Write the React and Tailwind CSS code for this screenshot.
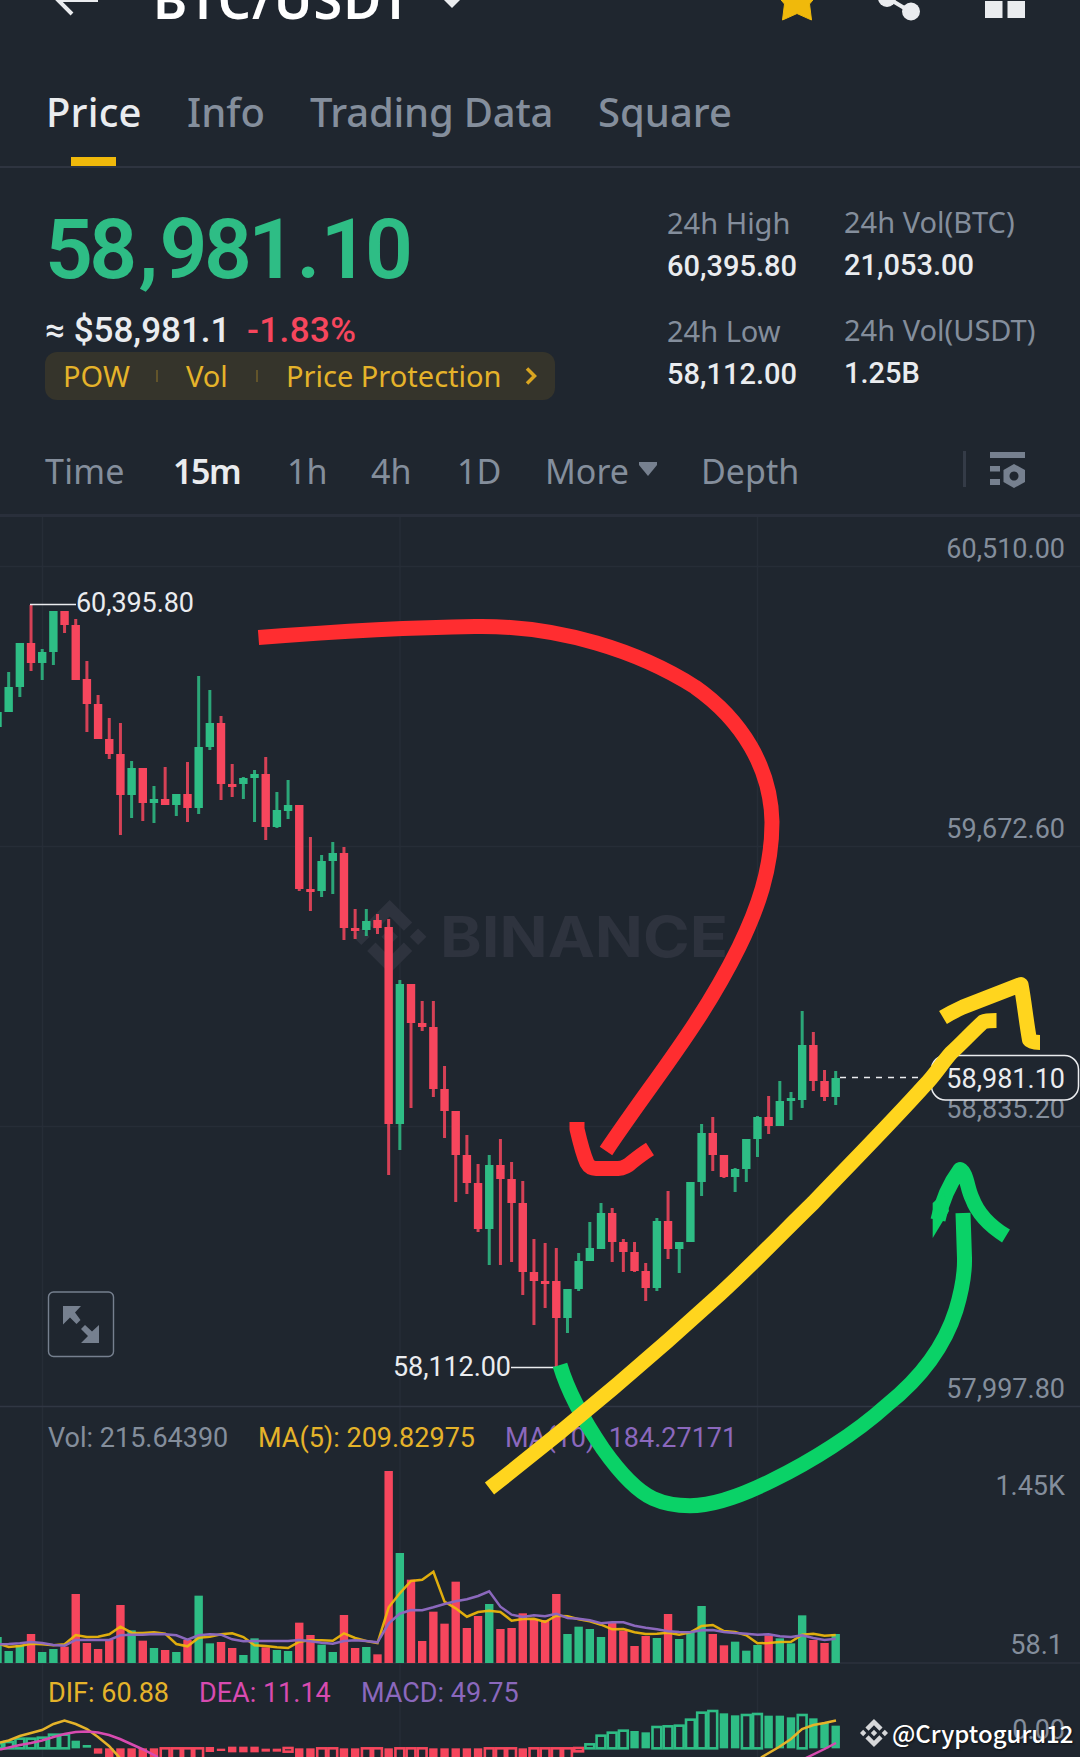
import React from 'react';

const UP = '#2ebd85';
const DOWN = '#f6465d';
const STEP = 11.176;
const cx = (i) => -2.5 + STEP * i;

// [high, body top, body bottom, low, rising]
const candles = [
  [712, 712, 727, 727, 1], [672, 687, 712, 712, 1], [643, 643, 687, 697, 1], [605, 643, 663, 671, 0],
  [649, 652, 663, 680, 1], [611, 611, 652, 665, 1], [611, 611, 625, 633, 0], [619, 625, 680, 680, 0],
  [661, 679, 704, 732, 0], [695, 704, 739, 739, 0], [718, 739, 754, 759, 0], [723, 754, 795, 835, 0],
  [761, 768, 795, 818, 1], [768, 768, 803, 821, 0], [786, 799, 803, 823, 1], [767, 799, 805, 805, 0],
  [794, 794, 805, 816, 1], [762, 794, 808, 822, 0], [676, 747, 808, 814, 1], [690, 723, 747, 750, 1],
  [716, 723, 784, 800, 0], [764, 784, 787, 797, 0], [777, 778, 784, 799, 1], [770, 774, 778, 822, 1],
  [757, 774, 827, 840, 0], [792, 810, 827, 828, 1], [780, 805, 811, 819, 1], [805, 805, 889, 891, 0],
  [837, 889, 892, 911, 0], [855, 861, 891, 897, 1], [842, 853, 861, 894, 1], [847, 853, 928, 940, 0],
  [909, 928, 931, 939, 0], [909, 921, 930, 936, 1], [914, 920, 928, 934, 0], [919, 927, 1124, 1175, 0],
  [980, 984, 1124, 1150, 1], [984, 984, 1023, 1108, 0], [1001, 1023, 1027, 1031, 0], [1001, 1027, 1089, 1097, 0],
  [1066, 1089, 1111, 1138, 0], [1111, 1111, 1155, 1202, 0], [1135, 1155, 1183, 1194, 0], [1164, 1183, 1229, 1232, 0],
  [1155, 1165, 1229, 1265, 1], [1139, 1165, 1179, 1265, 0], [1162, 1179, 1203, 1262, 0], [1181, 1203, 1272, 1295, 0],
  [1239, 1272, 1281, 1325, 0], [1243, 1281, 1284, 1308, 0], [1248, 1281, 1318, 1367, 0], [1289, 1289, 1318, 1333, 1],
  [1253, 1261, 1289, 1291, 1], [1222, 1248, 1261, 1261, 1], [1203, 1213, 1249, 1249, 1], [1208, 1213, 1242, 1262, 0],
  [1239, 1242, 1252, 1272, 0], [1242, 1252, 1271, 1272, 0], [1263, 1271, 1288, 1301, 0], [1218, 1221, 1288, 1291, 1],
  [1191, 1221, 1249, 1259, 0], [1242, 1242, 1249, 1273, 1], [1182, 1182, 1242, 1242, 1], [1124, 1133, 1182, 1196, 1],
  [1117, 1133, 1155, 1171, 0], [1155, 1155, 1177, 1178, 0], [1168, 1169, 1177, 1192, 1], [1139, 1139, 1169, 1182, 1],
  [1116, 1117, 1139, 1157, 1], [1096, 1117, 1126, 1134, 0], [1081, 1101, 1126, 1126, 1], [1092, 1098, 1101, 1120, 1],
  [1011, 1045, 1100, 1108, 1], [1032, 1045, 1081, 1091, 0], [1070, 1081, 1097, 1101, 0], [1071, 1078, 1097, 1105, 1],
];

// Volume tops and moving averages, in thirds of a pixel below y = 1450
const volume = [
  561, 603, 585, 552, 606, 597, 590, 432, 579, 597, 570, 465, 541, 572, 594, 600, 606, 570, 437, 580,
  576, 594, 615, 565, 592, 600, 603, 518, 555, 584, 606, 495, 594, 591, 613, 63, 309, 389, 573, 485,
  521, 395, 534, 498, 462, 537, 534, 490, 507, 510, 432, 552, 530, 537, 561, 519, 542, 588, 558, 564,
  492, 567, 545, 468, 552, 586, 575, 602, 585, 556, 565, 580, 496, 570, 579, 552,
];
const ma5 = [
  580, 591, 588, 581, 583, 586, 583, 555, 561, 560, 553, 530, 548, 549, 547, 551, 582, 589, 563, 560,
  553, 550, 561, 586, 588, 592, 594, 575, 571, 571, 572, 550, 564, 573, 579, 472, 430, 393, 389, 365,
  455, 475, 500, 486, 482, 486, 512, 507, 506, 516, 497, 499, 508, 514, 524, 538, 537, 547, 552, 551,
  548, 554, 547, 528, 525, 543, 546, 556, 580, 579, 576, 575, 554, 551, 557, 555,
];
const ma10 = [
  583, 582, 580, 576, 579, 585, 587, 570, 570, 570, 570, 556, 554, 554, 552, 553, 556, 569, 556, 553,
  554, 568, 574, 573, 573, 573, 573, 570, 574, 578, 581, 573, 571, 573, 577, 520, 491, 480, 481, 472,
  462, 454, 448, 438, 424, 470, 494, 501, 496, 499, 491, 504, 506, 511, 520, 517, 517, 527, 533, 538,
  544, 546, 547, 541, 540, 546, 549, 551, 554, 553, 559, 561, 556, 564, 570, 566,
];

// MACD histogram: [top, bottom, hollow, rising]
const red = (hollow) => [895, 950, hollow, 0];
const thin = (a, b, hollow = 0) => [a, b, hollow, 0];
const green = (top, hollow) => [top, 895, hollow, 1];
const macd = [
  green(880, 1), green(876, 1), green(866, 1), green(866, 1), green(863, 1), green(854, 1), green(854, 1),
  green(872, 0), [885, 893, 0, 1], thin(895, 911), red(0), red(0), red(0), red(0), red(0),
  red(1), red(1), red(1), red(1), thin(891, 906), thin(896, 903), thin(890, 907), thin(890, 907), thin(890, 907),
  thin(896, 905), thin(896, 905), thin(894, 905, 1), red(0), red(0), red(1), red(1), red(0), red(0), red(1),
  red(1), red(0), red(1), red(1), red(1), red(0), red(0), red(0), red(0), red(0), red(1), red(1), red(1),
  red(0), red(1), red(1), red(1), red(1), thin(894, 904, 1),
  green(883, 1), green(857, 1), green(848, 1), green(842, 1), green(843, 0), green(847, 0), green(831, 1),
  green(829, 1), green(827, 1), green(809, 1), green(788, 1), green(783, 1), green(790, 0), green(796, 0),
  green(795, 1), green(792, 1), green(797, 0), green(797, 0), green(802, 0), green(795, 1), green(805, 0),
  green(819, 0), green(827, 0),
];

const vy = (v) => 1450 + v / 3;
const line = (vals) => vals.map((v, i) => `${cx(i).toFixed(1)},${vy(v).toFixed(1)}`).join(' ');

const BINANCE =
  'M16.624 13.9202l2.7175 2.7154-7.353 7.353-7.353-7.352 2.7175-2.7164 4.6355 4.6595 4.6356-4.6595zm4.6366-4.6366L24 12l-2.7154 2.7164L18.5682 12l2.6924-2.7164zm-9.272.001l2.7163 2.6914-2.7164 2.7174v-.001L9.2721 12l2.7164-2.7154zm-9.2722-.001L5.4088 12l-2.6914 2.6924L0 12l2.7164-2.7164zM11.9885.0115l7.353 7.329-2.7174 2.7154-4.6356-4.6356-4.6355 4.6595-2.7174-2.7154 7.353-7.353z';

function Header() {
  return (
    <header className="flex h-7 items-start overflow-hidden">
      <svg className="ml-[50px] w-[103px] shrink-0" height="28" viewBox="50 0 103 28" fill="none" stroke="#eaecef" strokeWidth="4">
        <path d="M57 0H98M56 -2L72 14" />
      </svg>
      <span className="-mt-px w-[286px] shrink-0 text-[52px] leading-[0px] font-semibold tracking-[1px] whitespace-nowrap text-white">BTC/USDT</span>
      <svg className="shrink-0" width="641" height="28" viewBox="439 0 641 28">
        <path d="M441 -3H463L452 8z" fill="#eaecef" />
        <path d="M776 -6L784.500 4L782.500 20L797 13.500L811.500 20L809.500 4L818 -6z" fill="#f0b90b" stroke="#f0b90b" strokeWidth="1" strokeLinejoin="round" />
        <g fill="#eaecef">
          <circle cx="911" cy="11.500" r="9" />
          <circle cx="887" cy="-2" r="9" />
          <path d="M886 -3L911 12" stroke="#eaecef" strokeWidth="4" />
          <path d="M985 1h17.500v17H985zM1007.500 1h17.500v17h-17.500z" />
        </g>
      </svg>
    </header>
  );
}

function Tabs() {
  return (
    <nav className="border-b-2 border-[#2e3440] text-[#848e9c]">
      <div className="flex pt-[60px] pl-[46px] text-[40px] leading-[48px] font-medium whitespace-nowrap">
        <span className="w-[141px] tracking-[0.2px] text-[#eaecef]">Price</span>
        <span className="w-[123px]">Info</span>
        <span className="w-[288px] tracking-[-0.2px]">Trading Data</span>
        <span>Square</span>
      </div>
      <div className="mt-[21px] ml-[71px] h-[9px] w-[45px] bg-[#f0b90b]" />
    </nav>
  );
}

function Stat({ label, value }) {
  return (
    <div className="h-[108px] whitespace-nowrap">
      <div className="text-[29px] leading-10 text-[#848e9c]">{label}</div>
      <div className="mt-[3px] font-[Roboto] text-[29px] leading-10 font-medium text-[#eaecef]">{value}</div>
    </div>
  );
}

function Summary() {
  return (
    <section className="flex h-[246px] whitespace-nowrap">
      <div className="w-[667px] pt-[40px] pl-[45px]">
        <div className="font-[Roboto] text-[84px] leading-[84px] font-semibold tracking-[-3.7px] text-[#2ebd85]">
          58<span className="mx-[5px]">,</span>981<span className="mx-[4px]">.</span>10
        </div>
        <div className="mt-[19px] flex font-[Roboto] text-[35px] leading-10 font-medium">
          <span className="w-[202px] text-[#eaecef]">≈ $58,981.1</span>
          <span className="tracking-[0.4px] text-[#f6465d]">-1.83%</span>
        </div>
        <div className="mt-px flex h-12 w-[510px] items-center rounded-xl bg-[#35342b] pl-[18px] text-[29px] text-[#e5b32a]">
          <span className="w-[93px]">POW</span>
          <i className="mr-[28px] h-3 w-[2px] bg-[#62542a]" />
          <span className="w-[70px]">Vol</span>
          <i className="mr-[28px] h-3 w-[2px] bg-[#62542a]" />
          <span className="w-[239px]">Price Protection</span>
          <svg width="12" height="18" viewBox="0 0 12 18" fill="none" stroke="#d9a520" strokeWidth="3.500">
            <path d="M2 1.500L9.500 9L2 16.500" />
          </svg>
        </div>
      </div>
      <div className="w-[177px] pt-[35px]">
        <Stat label="24h High" value="60,395.80" />
        <Stat label="24h Low" value="58,112.00" />
      </div>
      <div className="pt-[34px]">
        <Stat label="24h Vol(BTC)" value="21,053.00" />
        <Stat label="24h Vol(USDT)" value="1.25B" />
      </div>
    </section>
  );
}

function Intervals() {
  return (
    <div className="flex h-[103px] border-b-[3px] border-[#292f3b] pt-[37px] pl-[45px] text-[34px] leading-10 whitespace-nowrap text-[#848e9c]">
      <span className="w-[128px] tracking-[0.3px]">Time</span>
      <span className="w-[114px] font-semibold tracking-[-1.4px] text-[#eaecef]">15m</span>
      <span className="w-[84px]">1h</span>
      <span className="w-[86px]">4h</span>
      <span className="w-[88px]">1D</span>
      <span className="w-[94px]">More</span>
      <svg className="mt-[11px] mr-[44px]" width="18" height="14" viewBox="0 0 18 14">
        <path d="M0 0H18V3L9 14L0 3z" fill="#76808f" />
      </svg>
      <span className="w-[262px]">Depth</span>
      <i className="h-9 w-[3px] bg-[#343b47]" />
      <svg className="ml-[24px]" width="36" height="37" viewBox="0 0 36 37" fill="#76808f">
        <path d="M0 1H35V7H0zM0 15H10V20.500H0zM0 28H10V34H0z" />
        <path fillRule="evenodd" d="M24 13L35 19V31L24 37L13.500 31V19zM24 20.500a4.500 4.500 0 1 0 0.010 0z" />
      </svg>
    </div>
  );
}

function AxisLabel({ y, x = 1065, children, fill = '#848e9c' }) {
  return (
    <text x={x} y={y} textAnchor="end" fill={fill}>
      {children}
    </text>
  );
}

function Chart() {
  return (
    <svg className="block font-[Roboto] text-[27px]" width="1080" height="1240" viewBox="0 517 1080 1240">
      {/* grid */}
      <path d="M42.500 517V1757M400 517V1757M757.500 517V1757M0 566.500H1080M0 846.500H1080M0 1126.500H1080" stroke="#262d37" strokeWidth="1.500" fill="none" />
      <path d="M0 1406.500H1080" stroke="#303743" strokeWidth="1.500" />
      <path d="M0 1663H1080" stroke="#282e39" strokeWidth="2" />

      {/* watermark */}
      <g fill="#2e333e">
        <path d={BINANCE} transform="translate(353 900) scale(3.060)" />
        <text x="440" y="957" textLength="288" lengthAdjust="spacingAndGlyphs" className="font-[Inter] text-[56px] font-bold">
          BINANCE
        </text>
      </g>

      {candles.map(([h, t, b, l, up], i) => (
        <g key={i} fill={up ? UP : DOWN}>
          <rect x={cx(i) - 1.5} y={h} width="3" height={l - h} opacity="0.85" />
          <rect x={cx(i) - 4.2} y={t} width="8.400" height={b - t} />
        </g>
      ))}

      {/* volume */}
      {volume.map((v, i) => (
        <rect key={i} x={cx(i) - 4.2} y={vy(v)} width="8.400" height={1663 - vy(v)} fill={candles[i][4] ? UP : DOWN} />
      ))}
      <polyline points={line(ma5)} fill="none" stroke="#f0b90b" strokeOpacity="0.92" strokeWidth="2.500" />
      <polyline points={line(ma10)} fill="none" stroke="#8b68bd" strokeWidth="2.500" />

      {/* macd */}
      {macd.map(([t, b, hollow, up], i) => {
        const color = up ? UP : DOWN;
        return hollow ? (
          <rect key={i} x={cx(i) - 4.4} y={vy(t)} width="8.800" height={(b - t) / 3} fill="none" stroke={color} strokeWidth="2.600" />
        ) : (
          <rect key={i} x={cx(i) - 4.2} y={vy(t)} width="8.400" height={(b - t) / 3} fill={color} />
        );
      })}
      <g fill="none" strokeWidth="2.500">
        <path d="M0 1742.500L8.700 1740.500L19.800 1736L31 1733L42 1730L53.500 1724L64.500 1720.500L75.700 1724L87 1729L98 1737L109 1746L120 1758M761 1757.500L779 1747L791 1739L802 1729L813.500 1725L824.500 1723L836 1720.500" stroke="#e5b32a" />
        <path d="M0 1749.500L19.800 1745L31 1743L42 1740.500L53.500 1737L64.500 1734L75.700 1732L87 1731.500L98 1732.500L109 1735L120 1739L131 1744L142 1749L158 1757M804 1759L824.500 1749L836 1743" stroke="#d84bb0" />
      </g>

      {/* high / low markers */}
      <g fill="#eaecef" stroke="none">
        <path d="M30 604.500H76M511 1367.500H556" stroke="#eaecef" strokeWidth="1.500" />
        <text x="76" y="612" textLength="118">60,395.80</text>
        <text x="393" y="1376" textLength="118">58,112.00</text>
      </g>

      <AxisLabel y={558}>60,510.00</AxisLabel>
      <AxisLabel y={838}>59,672.60</AxisLabel>
      <AxisLabel y={1118}>58,835.20</AxisLabel>
      <AxisLabel y={1398}>57,997.80</AxisLabel>
      <AxisLabel y={1495}>1.45K</AxisLabel>
      <AxisLabel y={1654} x={1063}>58.1</AxisLabel>
      <AxisLabel y={1739}>0.00</AxisLabel>

      {/* last price */}
      <path d="M840 1077.500H931" stroke="#eaecef" strokeWidth="1.500" strokeDasharray="6 6" />
      <rect x="931.500" y="1055.500" width="147" height="44.500" rx="14" fill="#1f262f" stroke="#eaecef" strokeWidth="1.500" />
      <AxisLabel y={1088} fill="#eaecef">58,981.10</AxisLabel>

      {/* fullscreen button */}
      <rect x="48.500" y="1292" width="65" height="64.500" rx="5" fill="none" stroke="#76808f" strokeWidth="1.400" />
      <path d="M63 1306H81L75 1312.500L80.500 1320L76.500 1324L70 1317.500L63 1324.500zM99 1343H81L88 1336L81 1329L85 1325L92 1331.500L99 1325z" fill="#76808f" />
    </svg>
  );
}

// Hand-drawn trend strokes laid over the chart
function Strokes() {
  return (
    <svg className="absolute top-0 left-0" width="1080" height="1240" viewBox="0 517 1080 1240" fill="none" strokeWidth="15" strokeLinejoin="round">
      <g stroke="#ff2d30">
        <path d="M258.500 637.500C330 632 400 627.500 475 626.500C560 625 640 652 695 687C742 720 771 768 772 822C772 870 757 910 739 947C700 1026 652 1082 606 1151" />
        <path d="M577 1122V1129C580 1142 583 1154 587 1163Q590 1168.500 596 1168.500H618Q626 1168 632 1162Q642 1154 650 1149" />
      </g>
      <g stroke="#0ad267">
        <path d="M560 1365C568 1392 586 1424 603 1449C620 1473 637 1491 653 1498.500C664 1503.500 676 1505.700 690 1505.700C716 1505.700 745 1494 773 1480C810 1462 855 1434 887 1405C922 1377 945 1345 956 1310Q965 1280 964.500 1258L963 1213" />
        <path d="M938 1220C942 1200 950 1183 960 1169.500C967 1173 967 1188 972 1198Q980 1220 1006 1236" />
        <path d="M932.700 1203V1238L949 1211L944 1193z" fill="#0ad267" stroke="none" />
      </g>
      <g stroke="#ffd51e">
        <path d="M489.500 1488.500C575 1422 650 1358 720 1294C760 1257 785 1230 813 1203C850 1164 890 1124 925 1085C935 1075 942 1063 951 1053C962 1043 972 1032 983 1022Q986 1020.500 996.500 1020.500" />
        <path d="M943 1017.500Q952 1012 963 1007L1021 984.500C1024 1000 1026 1020 1029.500 1040Q1031 1042.500 1040 1042.500" />
      </g>
    </svg>
  );
}

export default function App() {
  return (
    <main className="h-[1757px] w-[1080px] overflow-hidden bg-[#1f262f] font-['Noto_Sans',sans-serif]">
      <Header />
      <Tabs />
      <Summary />
      <Intervals />
      <div className="relative h-[1240px] whitespace-nowrap">
        <Chart />
        <div className="absolute top-[901px] left-[48px] flex font-[Roboto] text-[27px] leading-10">
          <span className="w-[210px] text-[#848e9c]">Vol: 215.64390</span>
          <span className="w-[247px] text-[#e5b32a]">MA(5): 209.82975</span>
          <span className="text-[#8b68bd]">MA(10): 184.27171</span>
        </div>
        <div className="absolute top-[1156px] left-[48px] flex font-[Roboto] text-[27px] leading-10">
          <span className="w-[151px] text-[#e5b32a]">DIF: 60.88</span>
          <span className="w-[162px] text-[#d84bb0]">DEA: 11.14</span>
          <span className="text-[#8b68bd]">MACD: 49.75</span>
        </div>
        <Strokes />
        <div className="absolute top-[1196px] left-[860px] flex items-center text-[24px] text-white">
          <svg className="mr-1" width="28" height="28" viewBox="0 0 24 24" fill="#d6d7d9">
            <path d={BINANCE} />
          </svg>
          <span className="font-['Noto_Sans_CJK_SC',sans-serif] leading-10 font-medium [text-shadow:1px_1px_2px_#0008]">@Cryptoguru12</span>
        </div>
      </div>
    </main>
  );
}
